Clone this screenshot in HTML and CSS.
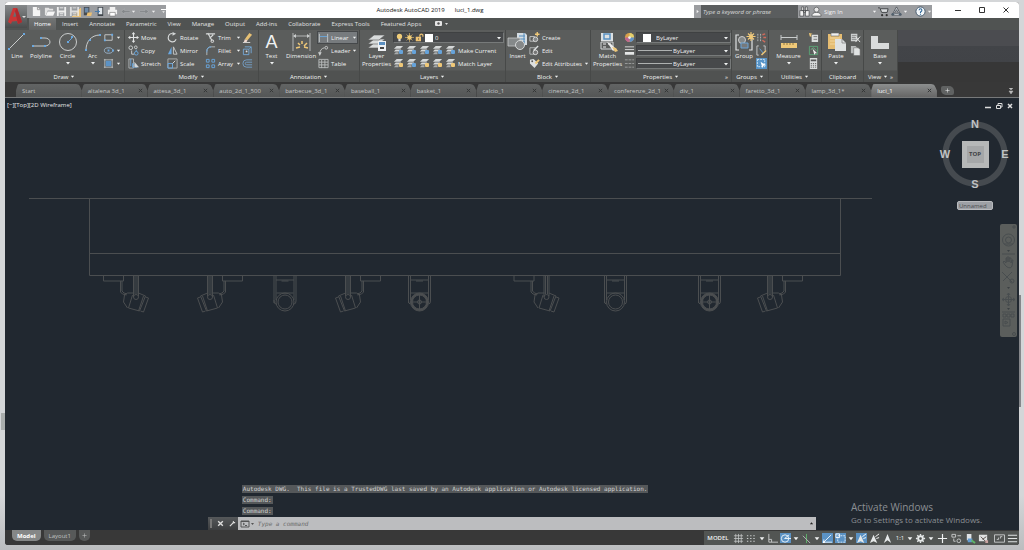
FILE: index.html
```html
<!DOCTYPE html>
<html lang="en">
<head>
<meta charset="utf-8">
<title>Autodesk AutoCAD 2019 - luci_1.dwg</title>
<link rel="stylesheet" href="styles.css">
</head>
<body>
<svg class="defs" aria-hidden="true">
  <symbol id="dn" viewBox="0 0 6 6"><path d="M1 2h4L3 4.500z" fill="currentColor"/></symbol>
  <symbol id="x" viewBox="0 0 6 6"><path d="M1 1l4 4M5 1L1 5" stroke="currentColor" stroke-width="1.200"/></symbol>
  <symbol id="new" viewBox="0 0 12 12"><path d="M2 1h5l3 3v7H2z" fill="#f4f4f4"/><path d="M7 1v3h3" fill="none" stroke="#999"/></symbol>
  <symbol id="open" viewBox="0 0 12 12"><path d="M1 2h4l1 1h4v2H4l-2 5H1z" fill="#e4e4e4"/><path d="M4 6h8l-2 4.500H2z" fill="#f5f5f5"/></symbol>
  <symbol id="save" viewBox="0 0 12 12"><path d="M1 1h10v10H1z" fill="#eee"/><path d="M3 1h6v4H3zM3 7h6v4H3z" fill="#999ca0"/><path d="M4 2h4M4 8h4M4 10h4" stroke="#eee"/></symbol>
  <symbol id="plot" viewBox="0 0 12 12"><path d="M3 1h6v3H3zM1 4h10v5H1z" fill="#f0f0f0"/><path d="M3 7h6v4H3z" fill="#fff" stroke="#777" stroke-width=".7"/></symbol>
  <symbol id="phone" viewBox="0 0 12 12"><path d="M4 1h6v10H4z" fill="#40464c"/><path d="M5 2h4v7H5z" fill="#dfe5ea"/><path d="M1 6h5M4 4l2 2-2 2" stroke="#3f76ad" fill="none"/></symbol>
  <symbol id="webopen" viewBox="0 0 12 12"><path d="M2 1h6v9H2z" fill="#464b50"/><path d="M3 2h4v5H3z" fill="#6c89a8"/><path d="M6 7h5l-1 4H5z" fill="#eabf72"/></symbol>
  <symbol id="undo" viewBox="0 0 12 12"><path d="M1 6l4-3v2h6v2H5v2z" fill="#85888b" stroke="#b5b7b9" stroke-width=".5"/></symbol>
  <symbol id="line" viewBox="0 0 24 20"><path d="M4 17L19 2" stroke="#c9cccc"/><path d="M3 16h2v2H3zM18 1h2v2h-2z" fill="#69a7df"/></symbol>
  <symbol id="pline" viewBox="0 0 24 20"><path d="M4 14h12a5 4 0 000-8h-5" fill="none" stroke="#c9cccc"/><path d="M3 13h2v2H3zM15 13h2v2h-2zM11 5h2v2h-2z" fill="#69a7df"/></symbol>
  <symbol id="circle" viewBox="0 0 24 20"><circle cx="12" cy="10" r="8.500" fill="none" stroke="#c9cccc"/><path d="M12 10l4-4" stroke="#69a7df"/><path d="M11 9h2v2h-2zM15 4h2v2h-2z" fill="#69a7df"/></symbol>
  <symbol id="arc" viewBox="0 0 24 20"><path d="M5 18C5 10 10 3 19 3" fill="none" stroke="#c9cccc"/><path d="M4 17h2v2H4zM8 7h2v2H8zM18 2h2v2h-2z" fill="#69a7df"/></symbol>
  <symbol id="rect" viewBox="0 0 12 12"><path d="M2 3h8v6H2z" fill="none" stroke="#c9cccc"/><path d="M1 8h2v2H1zM9 2h2v2H9z" fill="#69a7df"/></symbol>
  <symbol id="ell" viewBox="0 0 12 12"><ellipse cx="6" cy="6" rx="4.500" ry="3" fill="none" stroke="#9fb8d0"/><path d="M5 5h2v2H5zM10 5h2v2h-2z" fill="#69a7df"/></symbol>
  <symbol id="hatch" viewBox="0 0 12 12"><path d="M2 1v10M10 1v10M1 2h10M1 10h10" stroke="#b9bcbc"/><path d="M3 3h6v6H3z" fill="#5c92c4"/></symbol>
  <symbol id="move" viewBox="0 0 12 12"><path d="M6 1v10M1 6h10" stroke="#e2e4e4" stroke-width="1.200"/><path d="M6 0l2 2.500H4zM6 12l2-2.500H4zM0 6l2.500-2v4zM12 6L9.500 4v4z" fill="#e2e4e4"/></symbol>
  <symbol id="copy" viewBox="0 0 12 12"><g fill="none" stroke="#d0d3d3"><circle cx="3" cy="3" r="2"/><circle cx="8.500" cy="2.500" r="1.500"/><path d="M4 6v4h3"/></g><g fill="none" stroke="#69a7df"><circle cx="9" cy="9" r="2"/><path d="M9 5v2"/></g></symbol>
  <symbol id="stretch" viewBox="0 0 12 12"><path d="M1 1h5v10H1z" fill="none" stroke="#aeb3b6"/><path d="M3 1v8M5 6l5 4H5z" fill="none" stroke="#69a7df"/><path d="M7 4v6h5z" fill="#d2d6d8"/></symbol>
  <symbol id="rotate" viewBox="0 0 12 12"><path d="M10 8A4.500 4.500 0 116 1.700" fill="none" stroke="#d5d8d8" stroke-width="1.200"/><path d="M6 0l4 2-4 2z" fill="#d5d8d8"/></symbol>
  <symbol id="mirror" viewBox="0 0 12 12"><path d="M5 2v8H1z" fill="#69a7df"/><path d="M7 2v8h4z" fill="none" stroke="#c9cccc"/></symbol>
  <symbol id="scale" viewBox="0 0 12 12"><path d="M1 1h10v10H1z" fill="none" stroke="#aeb1b1"/><path d="M1 6h5v5H1z" fill="none" stroke="#69a7df"/><path d="M6 6l3-3" stroke="#ddd"/></symbol>
  <symbol id="trim" viewBox="0 0 12 12"><path d="M1 2h10M3 1l5 9M9 3L5 7" stroke="#d5d8d8" stroke-width="1.300"/><circle cx="8" cy="10" r="1.500" fill="none" stroke="#ddd"/></symbol>
  <symbol id="fillet" viewBox="0 0 12 12"><path d="M2 11V7q0-5 5-5h4" fill="none" stroke="#b9bcbc"/><path d="M2 8V7q0-5 5-5" fill="none" stroke="#69a7df"/></symbol>
  <symbol id="array" viewBox="0 0 12 12"><g fill="none" stroke="#69a7df"><path d="M1.500 1.500h3v3h-3zM7.500 1.500h3v3h-3zM7.500 7.500h3v3h-3z"/><path d="M1.500 7.500h3v3h-3z"/></g></symbol>
  <symbol id="erase" viewBox="0 0 12 12"><path d="M3 8l5-7 3 2-5 6z" fill="#e6c074"/><path d="M3 8l3 1-1 2H2z" fill="#f0d9d0"/><path d="M1 11.500h8" stroke="#ddd"/></symbol>
  <symbol id="explode" viewBox="0 0 12 12"><path d="M1.500 4.500h6v6h-6zM3 2h7v7M8 4l2-2" fill="none" stroke="#75a9d6"/><circle cx="5" cy="7" r="1" fill="#ddd"/></symbol>
  <symbol id="offset" viewBox="0 0 12 12"><path d="M11 2H5a4 4 0 000 8h6M11 4.600H5a1 1 0 000 2.800h6" fill="none" stroke="#75a0c8"/></symbol>
  <symbol id="dim" viewBox="0 0 24 20"><path d="M4 1v18M21 1v18M5 4h15" stroke="#c9cccc" stroke-width=".8"/><path d="M4 4l3-2v4zM21 4l-3-2v4z" fill="#c9cccc"/><path d="M7 16l4-1M9 11l2 2M13 9v3M18 11l-3 3M19 16l-4-1" stroke="#efc878" stroke-width="1.500"/></symbol>
  <symbol id="linear" viewBox="0 0 12 12"><path d="M1.500 2v9M10.500 2v9" stroke="#c5cacc"/><path d="M2 5h8" stroke="#69a7df"/></symbol>
  <symbol id="leader" viewBox="0 0 12 12"><path d="M2 10q0-6 5-7" fill="none" stroke="#c9cccc"/><circle cx="9" cy="3" r="1.500" fill="none" stroke="#c9cccc"/><path d="M0 8h4l-2 4z" fill="#c9cccc"/></symbol>
  <symbol id="table" viewBox="0 0 12 12"><path d="M1 1.500h10v9H1zM1 4.500h10M1 7.500h10M4 2v9M7.500 2v9" fill="none" stroke="#b9bcbc"/></symbol>
  <symbol id="layers" viewBox="0 0 24 20"><g fill="#d9dcdc" stroke="#5b5d5c" stroke-width=".6"><path d="M3 16l6-5h11l-6 5z"/><path d="M3 12l6-5h11l-6 5z"/><path d="M3 8l6-5h11l-6 5z"/></g><path d="M13 9h8v10h-8z" fill="#eef1f4"/><path d="M14 10h6v3h-6z" fill="#5a8fc0"/><path d="M15 16h4" stroke="#444" stroke-width="2"/></symbol>
  <symbol id="lay" viewBox="0 0 12 12"><path d="M1 4l3-3h7L8 4zM1 7l2-2h6L7 7z" fill="#d5d8d8"/><path d="M1 10l2-2h3v2z" fill="#a9acac"/></symbol>
  <symbol id="bulb" viewBox="0 0 12 12"><circle cx="6" cy="4.500" r="3.500" fill="#f0cd78"/><path d="M4.500 8h3v3h-3z" fill="#ddd"/></symbol>
  <symbol id="sun" viewBox="0 0 12 12"><path d="M6 0v12M0 6h12M2 2l8 8M10 2l-8 8" stroke="#c9a963"/><circle cx="6" cy="6" r="3" fill="#f0cd78"/></symbol>
  <symbol id="lock" viewBox="0 0 12 12"><path d="M1 5h7v6H1z" fill="#edc272"/><path d="M6.500 5V2.500q2-2 4 0V5" fill="none" stroke="#edc272" stroke-width="1.500"/><path d="M4 7h1v2H4z" fill="#555"/></symbol>
  <symbol id="insert" viewBox="0 0 24 20"><path d="M11 1h8l2 2v10H11z" fill="#d5dde3"/><path d="M13 4h6M13 7h6M13 10h6M18 1v11" stroke="#538cbd"/><path d="M2 6h12v8H2z" fill="#85898a" stroke="#c5c8c8" stroke-width=".8"/><circle cx="14" cy="13" r="4.500" fill="#858889" stroke="#d5d8d8"/></symbol>
  <symbol id="create" viewBox="0 0 12 12"><path d="M1 5h5v5H1z" fill="none" stroke="#c9cccc"/><circle cx="7" cy="8" r="2.500" fill="#85898a" stroke="#ddd"/><path d="M9 0v5M6.500 2.500h5" stroke="#efc878" stroke-width="1.500"/></symbol>
  <symbol id="edit" viewBox="0 0 12 12"><path d="M1 3h6v7H1z" fill="none" stroke="#b9bcbc"/><circle cx="7" cy="8" r="2.500" fill="#777" stroke="#ddd"/><path d="M5 6l5-5" stroke="#dcdfe0" stroke-width="1.500"/></symbol>
  <symbol id="attr" viewBox="0 0 12 12"><path d="M1 2l4-1 5 5-4 5-5-5z" fill="#dde0e0"/><path d="M7 6l4-4" stroke="#efc878" stroke-width="2"/><circle cx="3.500" cy="3.500" r="1" fill="#555"/></symbol>
  <symbol id="match" viewBox="0 0 24 20"><path d="M5 1h12v8H5z" fill="#dde1e3"/><path d="M8 2h6v5H8z" fill="none" stroke="#5a91c2" stroke-width="1.500"/><path d="M5 10h12v7H5z" fill="none" stroke="#d5d8d8"/><path d="M7 12h3M7 15h3M12 12h3" stroke="#eee"/><path d="M11 10l4 2 5 5-3 2z" fill="#eee"/><path d="M16 15l4 1 2 3-3 1z" fill="#efc878"/></symbol>
  <symbol id="wheel" viewBox="0 0 12 12"><circle cx="6" cy="6" r="5" fill="#d9a14b"/><path d="M6 6V1a5 5 0 015 5z" fill="#e4d06c"/><path d="M6 6h5a5 5 0 01-5 5z" fill="#6093c9"/><path d="M6 6v5a5 5 0 01-5-5z" fill="#be6592"/><circle cx="6" cy="6" r="1.500" fill="#eee"/></symbol>
  <symbol id="lw" viewBox="0 0 12 12"><path d="M1 2h10M1 5h10" stroke="#ddd"/><path d="M1 9h10" stroke="#e5e7e7" stroke-width="3"/></symbol>
  <symbol id="lt" viewBox="0 0 12 12"><path d="M1 2h10M1 6h10M1 10h10" stroke="#9c9f9f" stroke-dasharray="3 1"/></symbol>
  <symbol id="group" viewBox="0 0 24 20"><path d="M7 3H4v15h3M17 3h3v15h-3" fill="none" stroke="#dfe2e2" stroke-width="1.200"/><circle cx="10" cy="8" r="3.500" fill="#85898a" stroke="#ccc"/><path d="M9 11h7v5H9z" fill="#76797b" stroke="#6ba3d6"/><path d="M19 0v9M14.500 4.500h9M16 1.500l6 6M22 1.500l-6 6" stroke="#efc878" stroke-width="1.200"/></symbol>
  <symbol id="ungroup" viewBox="0 0 12 12"><path d="M2 2v8M5 2v8" stroke="#b9bcbc" stroke-dasharray="2 1"/><path d="M7 3l3-1M8 6h3M7 9l3 2" stroke="#cf6a5b" stroke-width="1.500"/></symbol>
  <symbol id="gedit" viewBox="0 0 12 12"><path d="M3 1H1v10h2M8 1h2v5" fill="none" stroke="#c9cccc"/><path d="M4 4l4 5" stroke="#69a7df"/><path d="M6 11l5-5" stroke="#efc878" stroke-width="1.500"/></symbol>
  <symbol id="gsel" viewBox="0 0 12 12"><path d="M0 0h12v12H0z" fill="#5794c8"/><path d="M1.500 1.500h8v8h-8z" fill="none" stroke="#d8e8f5" stroke-dasharray="2 1"/><path d="M5 4l6 4-3 .5L7 11z" fill="#fff"/></symbol>
  <symbol id="measure" viewBox="0 0 24 20"><path d="M4 3v5M20 3v5M4 5.500h16" stroke="#c9cccc"/><path d="M4 11h16v5H4z" fill="#efc878"/><path d="M7 11v2M10 11v2M13 11v2M16 11v2" stroke="#7c6638" stroke-width=".8"/></symbol>
  <symbol id="qsel" viewBox="0 0 12 12"><path d="M4 3h7v8H4z" fill="#dadddd"/><path d="M6 5h4M6 8h4" stroke="#777"/><path d="M1 1l4 1-2 1 1 2-2 0z" fill="#efc878"/></symbol>
  <symbol id="selall" viewBox="0 0 12 12"><path d="M1.500 1.500h9v9h-9z" fill="none" stroke="#5ba576"/><path d="M3 5l3-2 3 3" fill="none" stroke="#6db487"/><path d="M5 4l5 5-2 0-1 2z" fill="#eee"/></symbol>
  <symbol id="calc" viewBox="0 0 12 12"><path d="M2 0h8v12H2z" fill="#d9dcdc"/><path d="M3 2.500h6" stroke="#555" stroke-width="2"/><path d="M3 6h6M3 8h6M3 10h6" stroke="#666" stroke-dasharray="1.300 1"/></symbol>
  <symbol id="paste" viewBox="0 0 24 20"><path d="M4 2h14v15H4z" fill="#e6bd72"/><path d="M7 1h8v3H7z" fill="#efefef" stroke="#666" stroke-width=".6"/><path d="M6 6h10M6 9h10M6 12h10" stroke="#f2dca9" stroke-width=".8"/><path d="M11 7h7l4 4v8H11z" fill="#dfe2e3"/><path d="M18 7v4h4" fill="none" stroke="#777" stroke-width=".7"/></symbol>
  <symbol id="cut" viewBox="0 0 12 12"><path d="M1 2h7v8H1z" fill="#cdd0d0"/><path d="M2 4h5M2 6h5M2 8h5" stroke="#666" stroke-width=".7"/><path d="M6 5l5 6M11 5l-5 6" stroke="#eee"/></symbol>
  <symbol id="copyc" viewBox="0 0 12 12"><path d="M1 1h5l2 2v6H1z" fill="#b9bcbc"/><path d="M4 3h5l2 2v6.500H4z" fill="#e0e3e3" stroke="#666" stroke-width=".6"/></symbol>
  <symbol id="base" viewBox="0 0 24 20"><path d="M3 4h7v7h11v6H3z" fill="#d9dbdb"/></symbol>
  <symbol id="bino" viewBox="0 0 12 12"><path d="M3 1h2v4H3zM7 1h2v4H7zM1 5h4v6H1zM7 5h4v6H7zM5 5h2v2H5z" fill="#f0f0f0" stroke="#3c3f42" stroke-width=".7"/></symbol>
  <symbol id="user" viewBox="0 0 12 12"><circle cx="6" cy="4" r="2.700" fill="#e8e8e8" stroke="#4b4e50" stroke-width=".7"/><path d="M1 11q0-4 5-4t5 4z" fill="#f3f3f3" stroke="#4b4e50" stroke-width=".7"/></symbol>
  <symbol id="cart" viewBox="0 0 12 12"><path d="M0 2h2l2 5h6l1-4H3" fill="#d9dbdd" stroke="#3c3f42"/><circle cx="4.500" cy="10" r="1.200" fill="#333"/><circle cx="9.500" cy="10" r="1.200" fill="#333"/></symbol>
  <symbol id="a360" viewBox="0 0 12 12"><path d="M6 1l5 9H1zM6 4l2.500 4h-5z" fill="#dde3ea" stroke="#40464c" fill-rule="evenodd" stroke-width=".8"/><circle cx="2" cy="9" r="1.500" fill="#51606d"/><circle cx="10" cy="9" r="1.500" fill="#51606d"/></symbol>
  <symbol id="help" viewBox="0 0 12 12"><circle cx="6" cy="6" r="5" fill="#f3f7fa" stroke="#41566a"/><path d="M4.500 4.500q0-1.500 1.500-1.500t1.500 1.500Q7.500 5.500 6 6.500V7.500M6 8.500v1" fill="none" stroke="#2f6798" stroke-width="1.200"/></symbol>
  <symbol id="grid" viewBox="0 0 12 12"><path d="M3 1v10M6 1v10M9 1v10M1 3h10M1 6h10M1 9h10" stroke="#c9cccc" stroke-width=".8"/></symbol>
  <symbol id="dots" viewBox="0 0 12 12"><path d="M1 3h10M1 6h10M1 9h10" stroke="#d9dcdc" stroke-dasharray="1.500 2"/></symbol>
  <symbol id="ortho" viewBox="0 0 12 12"><path d="M2 1v9h10M2 7h3v3" fill="none" stroke="#c9cccc"/></symbol>
  <symbol id="polar" viewBox="0 0 12 12"><circle cx="5.500" cy="6" r="4" fill="none" stroke="#eef5fb"/><path d="M5 6h7M5 6l5-4" stroke="#eef5fb"/></symbol>
  <symbol id="iso" viewBox="0 0 12 12"><path d="M6 1v10" stroke="#5eb56b"/><path d="M2 3l8 8" stroke="#b9bcbc"/></symbol>
  <symbol id="track" viewBox="0 0 12 12"><path d="M2 10L10 2M2 10h9M2 10V7" stroke="#eef5fb" fill="none"/><path d="M1 9h2v2H1z" fill="#fff"/></symbol>
  <symbol id="osnap" viewBox="0 0 12 12"><path d="M3 3h8v7H3z" fill="none" stroke="#dcebf7" stroke-dasharray="2 1"/><path d="M1 1h4v4H1z" fill="none" stroke="#fff"/></symbol>
  <symbol id="anno" viewBox="0 0 12 12"><path d="M6 1L2 11l4-3 4 3z" fill="#e6e9e9"/></symbol>
  <symbol id="annov" viewBox="0 0 12 12"><path d="M5 2L1 11l4-2 4 2z" fill="#e6e9e9"/><path d="M7 4l4-3M8 6l3-1" stroke="#fff"/></symbol>
  <symbol id="gear" viewBox="0 0 12 12"><circle cx="6" cy="6" r="2.500" fill="none" stroke="#e6e9e9" stroke-width="2"/><path d="M6 1v2M6 9v2M1 6h2M9 6h2M2.500 2.500l1.300 1.300M8.200 8.200l1.300 1.300M9.500 2.500L8.200 3.800M3.800 8.200L2.500 9.500" stroke="#e6e9e9" stroke-width="1.500"/></symbol>
  <symbol id="plus" viewBox="0 0 12 12"><path d="M6 1v10M1 6h10" stroke="currentColor" stroke-width="1.300"/></symbol>
  <symbol id="units" viewBox="0 0 12 12"><path d="M1 1.500h4v3H1zM3 6v3h2M7 3h4" fill="none" stroke="#c9cccc"/><circle cx="8.500" cy="8.500" r="2" fill="none" stroke="#c9cccc"/></symbol>
  <symbol id="iso2" viewBox="0 0 12 12"><path d="M2 1h5v7H2z" fill="#dfe3e6"/><path d="M3 6h5v4H3z" fill="#629bd0"/><path d="M7 8l4 3" stroke="#5fb567" stroke-width="2"/></symbol>
  <symbol id="hw" viewBox="0 0 12 12"><path d="M1 2h9v7H1z" fill="#dfe1e1"/><path d="M3 4l6 6M9 4L5 7" stroke="#534a48"/><path d="M8 8h3v3H8z" fill="#c9a3a0"/></symbol>
  <symbol id="clean" viewBox="0 0 12 12"><path d="M.5 2h11v8H.5z" fill="none" stroke="#c9cccc"/><path d="M7 6V4h2M3 7h2V5" fill="none" stroke="#c9cccc"/></symbol>
  <symbol id="menu" viewBox="0 0 12 12"><path d="M1 2.500h10M1 6h10M1 9.500h10" stroke="#e0e3e3" stroke-width="1.200"/></symbol>
  <symbol id="lampA" viewBox="0 0 50 40" overflow="visible">
    <path d="M0 0v5h20V0M17 5v11l2 2 4 1M18.500 5v10l2 2 3 1M30 0v21M35 0v20M31.500 0v18M33.500 0v18M30.500 17L24 17l-3 2-1 7 4 6M35 17l7 3-6 15-11-3 4-13M42 21l3 1-5 14-3-1M40 20l-5 15"/><circle cx="32.500" cy="21" r="2.500"/>
  </symbol>
  <symbol id="lampC" viewBox="0 0 24 40" overflow="visible">
    <path d="M.5 0v25q0 3 2 3M2.500 0v24M22.500 0v25q0 3-2 3M20.500 0v24M2.500 4h18M3 17h17M8 5h7M.5 27v-3"/><circle cx="11.500" cy="26" r="9"/><circle cx="11.500" cy="26" r="7"/>
  </symbol>
</svg>

<div class="window">
  <header class="head">
    <button class="app" aria-label="Application menu"><svg viewBox="0 0 22 22"><path d="M3 16L8 2h4l5 14-4 2-1-3-5 .5-1 2.500zM8 11l4-.5L10 5z" fill="#c93636" fill-rule="evenodd"/><path d="M12 2l5 14-4 2-3-13z" fill="#b02a2e"/><path d="M17 10h4l-2 2z" fill="#ddd"/></svg></button>
    <div class="title">
      <div class="qat">
        <button aria-label="New"><svg><use href="#new"/></svg></button><button aria-label="Open"><svg><use href="#open"/></svg></button><button aria-label="Save"><svg><use href="#save"/></svg></button><button class="saveas" aria-label="Save as"><svg><use href="#save"/></svg></button><button aria-label="Open from web"><svg><use href="#webopen"/></svg></button><button aria-label="Save to mobile"><svg><use href="#phone"/></svg></button><button aria-label="Plot"><svg><use href="#plot"/></svg></button><button aria-label="Undo"><svg><use href="#undo"/></svg></button><svg class="dn"><use href="#dn"/></svg><button class="redo" aria-label="Redo"><svg><use href="#undo"/></svg></button><svg class="dn"><use href="#dn"/></svg><svg class="dn bar"><use href="#dn"/></svg>
      </div>
      <div class="caption"><span>Autodesk AutoCAD 2019</span><span>luci_1.dwg</span></div>
      <div class="info">
        <button class="expand" aria-label="Expand search"><svg class="dn right"><use href="#dn"/></svg></button>
        <input aria-label="Search" placeholder="Type a keyword or phrase">
        <button aria-label="Find"><svg><use href="#bino"/></svg></button>
        <button class="sign"><svg><use href="#user"/></svg>Sign In</button>
        <svg class="dn"><use href="#dn"/></svg>
        <button aria-label="Store"><svg><use href="#cart"/></svg></button>
        <button aria-label="Account"><svg><use href="#a360"/></svg></button>
        <svg class="dn"><use href="#dn"/></svg>
        <button class="helpb" aria-label="Help"><svg><use href="#help"/></svg></button>
        <svg class="dn"><use href="#dn"/></svg>
      </div>
      <div class="winbtns">
        <button aria-label="Minimize"><svg viewBox="0 0 8 8"><path d="M1 4.500h6" stroke="#333"/></svg></button>
        <button aria-label="Maximize"><svg viewBox="0 0 8 8"><path d="M1.500 1.500h5v5h-5z" fill="none" stroke="#333"/></svg></button>
        <button aria-label="Close"><svg viewBox="0 0 8 8"><path d="M1.500 1.500l5 5M6.500 1.500l-5 5" stroke="#333"/></svg></button>
      </div>
    </div>
    <nav class="menu">
      <button class="on">Home</button><button>Insert</button><button>Annotate</button><button>Parametric</button><button>View</button><button>Manage</button><button>Output</button><button>Add-ins</button><button>Collaborate</button><button>Express Tools</button><button>Featured Apps</button>
      <button class="cam" aria-label="Ribbon display"><svg viewBox="0 0 18 8"><rect x="3" y="1" width="7" height="5" rx="1" fill="#e5e5e5"/><circle cx="6.500" cy="3.500" r="1.200" fill="#555"/><path d="M13 3h3l-1.500 2z" fill="#ddd"/></svg></button>
    </nav>
  </header>

  <section class="ribbon">
    <div class="panel draw">
      <div class="tools">
        <button class="big"><svg><use href="#line"/></svg>Line</button>
        <button class="big"><svg><use href="#pline"/></svg>Polyline</button>
        <button class="big"><svg><use href="#circle"/></svg>Circle<svg class="dn"><use href="#dn"/></svg></button>
        <button class="big"><svg><use href="#arc"/></svg>Arc<svg class="dn"><use href="#dn"/></svg></button>
        <div class="col">
          <button class="t" aria-label="Rectangle"><svg><use href="#rect"/></svg><svg class="dn"><use href="#dn"/></svg></button>
          <button class="t" aria-label="Ellipse"><svg><use href="#ell"/></svg><svg class="dn"><use href="#dn"/></svg></button>
          <button class="t" aria-label="Hatch"><svg><use href="#hatch"/></svg><svg class="dn"><use href="#dn"/></svg></button>
        </div>
      </div>
      <h2>Draw <svg class="dn"><use href="#dn"/></svg></h2>
    </div>
    <div class="panel modify">
      <div class="tools">
        <div class="col"><button class="t"><svg><use href="#move"/></svg>Move</button><button class="t"><svg><use href="#copy"/></svg>Copy</button><button class="t"><svg><use href="#stretch"/></svg>Stretch</button></div>
        <div class="col"><button class="t"><svg><use href="#rotate"/></svg>Rotate</button><button class="t"><svg><use href="#mirror"/></svg>Mirror</button><button class="t"><svg><use href="#scale"/></svg>Scale</button></div>
        <div class="col"><button class="t far"><svg><use href="#trim"/></svg>Trim<svg class="dn"><use href="#dn"/></svg></button><button class="t far"><svg><use href="#fillet"/></svg>Fillet<svg class="dn"><use href="#dn"/></svg></button><button class="t far"><svg><use href="#array"/></svg>Array<svg class="dn"><use href="#dn"/></svg></button></div>
        <div class="col"><button class="t" aria-label="Erase"><svg><use href="#erase"/></svg></button><button class="t" aria-label="Explode"><svg><use href="#explode"/></svg></button><button class="t" aria-label="Offset"><svg><use href="#offset"/></svg></button></div>
      </div>
      <h2>Modify <svg class="dn"><use href="#dn"/></svg></h2>
    </div>
    <div class="panel annotation">
      <div class="tools">
        <button class="big"><span class="letter">A</span>Text<svg class="dn"><use href="#dn"/></svg></button>
        <button class="big"><svg><use href="#dim"/></svg>Dimension</button>
        <div class="col"><button class="t far lin"><svg><use href="#linear"/></svg>Linear<svg class="dn"><use href="#dn"/></svg></button><button class="t far"><svg><use href="#leader"/></svg>Leader<svg class="dn"><use href="#dn"/></svg></button><button class="t"><svg><use href="#table"/></svg>Table</button></div>
      </div>
      <h2>Annotation <svg class="dn"><use href="#dn"/></svg></h2>
    </div>
    <div class="panel layers">
      <div class="tools">
        <button class="big"><svg><use href="#layers"/></svg>Layer<br>Properties</button>
        <div class="col">
          <div class="combo"><svg><use href="#bulb"/></svg><svg><use href="#sun"/></svg><svg><use href="#lock"/></svg><i class="swatch"></i><select aria-label="Layer"><option>0</option></select><svg class="dn"><use href="#dn"/></svg></div>
          <div class="row"><button class="t b" aria-label="Off"><svg><use href="#lay"/></svg></button><button class="t b" aria-label="Isolate"><svg><use href="#lay"/></svg></button><button class="t b" aria-label="Freeze"><svg><use href="#lay"/></svg></button><button class="t b" aria-label="Lock"><svg><use href="#lay"/></svg></button><button class="t b"><svg><use href="#lay"/></svg>Make Current</button></div>
          <div class="row"><button class="t y" aria-label="Turn all on"><svg><use href="#lay"/></svg></button><button class="t b" aria-label="Unisolate"><svg><use href="#lay"/></svg></button><button class="t y" aria-label="Thaw all"><svg><use href="#lay"/></svg></button><button class="t y" aria-label="Unlock"><svg><use href="#lay"/></svg></button><button class="t y"><svg><use href="#lay"/></svg>Match Layer</button></div>
        </div>
      </div>
      <h2>Layers <svg class="dn"><use href="#dn"/></svg></h2>
    </div>
    <div class="panel block">
      <div class="tools">
        <button class="big"><svg><use href="#insert"/></svg>Insert</button>
        <div class="col"><button class="t"><svg><use href="#create"/></svg>Create</button><button class="t"><svg><use href="#edit"/></svg>Edit</button><button class="t far"><svg><use href="#attr"/></svg>Edit Attributes<svg class="dn"><use href="#dn"/></svg></button></div>
      </div>
      <h2>Block <svg class="dn"><use href="#dn"/></svg></h2>
    </div>
    <div class="panel props">
      <div class="tools">
        <button class="big"><svg><use href="#match"/></svg>Match<br>Properties</button>
        <div class="col"><button class="t" aria-label="Color"><svg><use href="#wheel"/></svg></button><button class="t" aria-label="Lineweight"><svg><use href="#lw"/></svg></button><button class="t" aria-label="Linetype"><svg><use href="#lt"/></svg></button></div>
        <div class="col">
          <div class="combo"><i class="swatch"></i><select aria-label="Object color"><option>ByLayer</option></select><svg class="dn"><use href="#dn"/></svg></div>
          <div class="combo"><i class="rule"></i><select aria-label="Object lineweight"><option>ByLayer</option></select><svg class="dn"><use href="#dn"/></svg></div>
          <div class="combo"><i class="rule"></i><select aria-label="Object linetype"><option>ByLayer</option></select><svg class="dn"><use href="#dn"/></svg></div>
        </div>
      </div>
      <h2>Properties <svg class="dn"><use href="#dn"/></svg><span class="launch">»</span></h2>
    </div>
    <div class="panel groups">
      <div class="tools">
        <button class="big"><svg><use href="#group"/></svg>Group</button>
        <div class="col"><button class="t" aria-label="Ungroup"><svg><use href="#ungroup"/></svg></button><button class="t" aria-label="Group edit"><svg><use href="#gedit"/></svg></button><button class="t" aria-label="Group selection"><svg><use href="#gsel"/></svg></button></div>
      </div>
      <h2>Groups <svg class="dn"><use href="#dn"/></svg></h2>
    </div>
    <div class="panel utils">
      <div class="tools">
        <button class="big"><svg><use href="#measure"/></svg>Measure<svg class="dn"><use href="#dn"/></svg></button>
        <div class="col"><button class="t" aria-label="Quick select"><svg><use href="#qsel"/></svg></button><button class="t" aria-label="Select all"><svg><use href="#selall"/></svg></button><button class="t" aria-label="Calculator"><svg><use href="#calc"/></svg></button></div>
      </div>
      <h2>Utilities <svg class="dn"><use href="#dn"/></svg></h2>
    </div>
    <div class="panel clip">
      <div class="tools">
        <button class="big"><svg><use href="#paste"/></svg>Paste<svg class="dn"><use href="#dn"/></svg></button>
        <div class="col"><button class="t" aria-label="Cut"><svg><use href="#cut"/></svg></button><button class="t" aria-label="Copy clip"><svg><use href="#copyc"/></svg></button></div>
      </div>
      <h2>Clipboard</h2>
    </div>
    <div class="panel view">
      <div class="tools"><button class="big"><svg><use href="#base"/></svg>Base<svg class="dn"><use href="#dn"/></svg></button></div>
      <h2>View <svg class="dn"><use href="#dn"/></svg> »</h2>
    </div>
  </section>

  <nav class="files">
    <div class="file"><button>Start</button></div>
    <div class="file"><button>altalena 3d_1</button><svg class="dn"><use href="#x"/></svg></div>
    <div class="file"><button>attesa_3d_1</button><svg class="dn"><use href="#x"/></svg></div>
    <div class="file"><button>auto_2d_1_500</button><svg class="dn"><use href="#x"/></svg></div>
    <div class="file"><button>barbecue_3d_1</button><svg class="dn"><use href="#x"/></svg></div>
    <div class="file"><button>baseball_1</button><svg class="dn"><use href="#x"/></svg></div>
    <div class="file"><button>basket_1</button><svg class="dn"><use href="#x"/></svg></div>
    <div class="file"><button>calcio_1</button><svg class="dn"><use href="#x"/></svg></div>
    <div class="file"><button>cinema_2d_1</button><svg class="dn"><use href="#x"/></svg></div>
    <div class="file"><button>conferenze_2d_1</button><svg class="dn"><use href="#x"/></svg></div>
    <div class="file"><button>div_1</button><svg class="dn"><use href="#x"/></svg></div>
    <div class="file"><button>faretto_3d_1</button><svg class="dn"><use href="#x"/></svg></div>
    <div class="file"><button>lamp_3d_1*</button><svg class="dn"><use href="#x"/></svg></div>
    <div class="file on"><button>luci_1</button><svg class="dn"><use href="#x"/></svg></div>
    <div class="tail"><button class="add" aria-label="New drawing"><svg class="dn"><use href="#plus"/></svg></button><button aria-label="More tabs"><svg class="more" viewBox="0 0 6 8"><path d="M1 1l2 2 2-2M1 4h4L3 7z" fill="#bbb" stroke="#bbb" stroke-width=".5"/></svg></button></div>
  </nav>

  <main class="canvas">
    <svg class="drawing" viewBox="5 98 1014 432" preserveAspectRatio="xMidYMin meet" role="img" aria-label="Ceiling track with spotlights">
      <path d="M29 198.500H872M89.500 198.500V275.500H840.500V198.500M89.500 253.500H840.500"/>
      <use href="#lampA" x="103.500" y="276" width="50" height="40"/>
      <use href="#lampA" x="514" y="276" width="50" height="40"/>
      <use href="#lampA" width="50" height="40" transform="translate(242.500 276) scale(-1 1)"/>
      <use href="#lampA" width="50" height="40" transform="translate(380.500 276) scale(-1 1)"/>
      <use href="#lampA" width="50" height="40" transform="translate(802.500 276) scale(-1 1)"/>
      <use href="#lampC" x="273.500" y="276" width="24" height="40"/>
      <use href="#lampC" x="408" y="276" width="24" height="40"/>
      <use href="#lampC" x="604" y="276" width="24" height="40"/>
      <use href="#lampC" x="698" y="276" width="24" height="40"/>
      <g><circle cx="419.500" cy="302" r="8" stroke-width="2"/><path d="M419.500 295v14M412.500 302h14"/><circle cx="419.500" cy="302" r="2"/></g>
      <g><circle cx="709.500" cy="302" r="8" stroke-width="2"/><path d="M709.500 295v14M702.500 302h14"/><circle cx="709.500" cy="302" r="2"/></g>
    </svg>
    <div class="vp">[−][Top][2D Wireframe]</div>
    <div class="vpbtns">
      <svg viewBox="0 0 8 8"><path d="M1 5.500h6" stroke="#ddd" stroke-width="1.500"/></svg>
      <svg viewBox="0 0 8 8"><path d="M1.500 3.500h4v3h-4zM3 3V1.500h4V5H6" fill="none" stroke="#ddd"/></svg>
      <svg viewBox="0 0 8 8"><path d="M2 2l4 4M6 2L2 6" stroke="#ddd" stroke-width="1.500"/></svg>
    </div>
    <div class="side">
      <div class="cube">
        <b class="n">N</b><b class="w">W</b><button>TOP</button><b class="e">E</b><b class="s">S</b>
      </div>
      <button class="ucs">Unnamed</button>
    </div>
    <div class="navbar">
      <svg viewBox="0 0 17 113"><g fill="none" stroke="#484d4f"><circle cx="8.500" cy="16" r="6"/><circle cx="8.500" cy="16" r="3"/><path d="M4 20h9M2 30h13M2 88h13M13 2h2v2h-2z"/><path d="M5 41l-2-3 1-1 2 2v-5h1v4-5h2v5-4h2v5l1-3h1l-1 6q-1 3-5 1zM2 48l10 10M12 48L3 57"/><circle cx="12" cy="57" r="2"/><path d="M8.500 69v13M2 75.500h13M7 71l1.500-2 1.500 2M7 80l1.500 2 1.500-2M4 74l-2 1.500 2 1.500M13 74l2 1.500-2 1.500"/><circle cx="8.500" cy="75.500" r="3"/><path d="M3 90h3v3H3zM7 90h3v3H7zM11 90h3v3h-3zM3 95h7v7H3z"/><path d="M5 97l3 1.500-3 1.500z"/><circle cx="14" cy="110" r="1.500"/></g><path d="M7 26h3l-1.500 2zM7 63h3l-1.500 2zM7 84h3l-1.500 2z" fill="#3b4044"/></svg>
    </div>
    <div class="watermark"><strong>Activate Windows</strong><span>Go to Settings to activate Windows.</span></div>
    <div class="command">
      <div class="log"><span>Autodesk DWG.&nbsp; This file is a TrustedDWG last saved by an Autodesk application or Autodesk licensed application.</span><span>Command:</span><span>Command:</span></div>
      <div class="prompt">
        <div class="grip"><i></i><button aria-label="Close"><svg><use href="#x"/></svg></button><button aria-label="Customize"><svg viewBox="0 0 8 8"><path d="M1 7l4-4" stroke="#ddd" stroke-width="1.500"/><path d="M5 1v2h2" fill="none" stroke="#ddd" stroke-width="1.200"/></svg></button></div>
        <svg class="term" viewBox="0 0 14 8"><path d="M1 1h8v6H1z" fill="none" stroke="#555"/><path d="M1 1.500h8M3 3l1.500 1L3 5M5 5.500h2" fill="none" stroke="#555"/><path d="M11 3h3l-1.500 2z" fill="#555"/></svg>
        <input aria-label="Command" placeholder="Type a command">
        <svg class="dn up"><use href="#dn"/></svg>
      </div>
    </div>
  </main>

  <footer class="status">
    <div class="layouts"><button class="on">Model</button><button>Layout1</button><button class="plus" aria-label="New layout"><svg class="dn"><use href="#plus"/></svg></button></div>
    <div class="toggles">
      <button class="txt">MODEL</button>
      <button aria-label="Grid"><svg><use href="#grid"/></svg></button><button aria-label="Snap"><svg><use href="#dots"/></svg></button><svg class="dn"><use href="#dn"/></svg>
      <button aria-label="Ortho"><svg><use href="#ortho"/></svg></button><button class="on" aria-label="Polar"><svg><use href="#polar"/></svg></button><svg class="dn"><use href="#dn"/></svg>
      <button aria-label="Isodraft"><svg><use href="#iso"/></svg></button><svg class="dn"><use href="#dn"/></svg>
      <button class="on" aria-label="Tracking"><svg><use href="#track"/></svg></button><button class="on" aria-label="Object snap"><svg><use href="#osnap"/></svg></button><svg class="dn"><use href="#dn"/></svg>
      <button class="on" aria-label="Annotation visibility"><svg><use href="#annov"/></svg></button><button aria-label="Auto scale"><svg><use href="#annov"/></svg></button><button aria-label="Annotation scale"><svg><use href="#anno"/></svg></button><button class="ratio">1:1</button><svg class="dn"><use href="#dn"/></svg>
      <button aria-label="Workspace"><svg><use href="#gear"/></svg></button><svg class="dn"><use href="#dn"/></svg>
      <button class="wide" aria-label="Monitor"><svg><use href="#plus"/></svg></button><button class="wide" aria-label="Units"><svg><use href="#units"/></svg></button><button class="wide" aria-label="Isolate objects"><svg><use href="#iso2"/></svg></button><button aria-label="Hardware"><svg><use href="#hw"/></svg></button><button class="wide gapl" aria-label="Clean screen"><svg><use href="#clean"/></svg></button><button aria-label="Customization"><svg><use href="#menu"/></svg></button>
    </div>
  </footer>
</div>
</body>
</html>
```
FILE: styles.css
```css
* { box-sizing: border-box; }
body {
  margin: 0;
  min-height: 100vh;
  padding: 2px 5px 5px;
  display: flex;
  font: 6px/8px "Open Sans", "Noto Sans", sans-serif;
  color: #f0f2f2;
  background:
    linear-gradient(#a9adac, #a9adac) 1px 413px / 4px 17px no-repeat,
    linear-gradient(#85878b, #85878b) right 3px top 295px / 2px 112px no-repeat,
    linear-gradient(#d4d6d8 90%, #bbbdbf);
}
button, input, select { font: inherit; color: inherit; background: none; border: 0; padding: 0; margin: 0; min-width: 0; }
button { display: flex; align-items: center; justify-content: center; white-space: nowrap; }
svg { display: block; width: 11px; height: 11px; flex: none; }
.defs { position: absolute; width: 0; height: 0; }
.dn { width: 5px; height: 5px; }
.window { flex: 1; min-width: 0; display: flex; flex-direction: column; overflow: hidden; border-radius: 3px; background: #383838; }

.head { display: grid; grid-template: 16px 12px / 22px minmax(0, 1fr); background: linear-gradient(#fff 16px, #505352 16px); }
.app { grid-row: 1 / 3; margin: 3px 0 2px; background: linear-gradient(#85888a, #4a4c4c); }
.app svg { width: 22px; height: 22px; }
.title { display: flex; align-items: stretch; color: #333; }
.title .qat, .title .info { display: flex; align-items: center; background: #9b9da0; margin-top: 3px; }
.qat { width: 139px; padding-left: 3px; color: #eee; }
.qat button, .info button { width: 13px; }
.saveas { background: linear-gradient(135deg, transparent 60%, #eabf72 60%); }
.saveas svg { opacity: .8; }
.redo { margin-left: 2px; transform: scaleX(-1); }
.bar { margin-left: 5px; border-top: 1px solid #fff; }
.caption { flex: 1; display: flex; align-items: center; justify-content: center; gap: 10px; color: #111; }
.info { width: 238px; color: #f4f4f4; }
.title .info input { width: 97px; height: 13px; padding: 0 2px; background: #5a5d5e; font-style: italic; }
input::placeholder { color: inherit; opacity: .8; }
.info .expand { width: 7px; }
.right { transform: rotate(-90deg); }
.info .sign { flex: 1; justify-content: flex-start; gap: 2px; }
.info .helpb { margin-left: 6px; }
.winbtns { width: 87px; padding-left: 14px; display: flex; }
.winbtns button { width: 24px; }
.winbtns svg { width: 8px; height: 8px; }
.menu { display: flex; gap: 1px; padding-left: 2px; color: #e0e2e2; }
.menu button { padding: 0 5px; }
.menu .on { background: linear-gradient(#727474, #606262); color: #fff; border-radius: 1px 1px 0 0; }
.menu .cam svg { width: 18px; height: 8px; }

.ribbon { display: flex; background: linear-gradient(#4b4c50 16px, #424448 16px, #414347 32px, #373737 32px); }
.panel { flex: none; border-right: 1px solid #474948; background: #5b5d5c; }
.tools { display: grid; height: 40px; padding: 1px 2px 0 0; justify-content: start; }
.panel h2 { display: flex; align-items: center; justify-content: center; gap: 2px; margin: 0; height: 12px; font: inherit; background: #505251; border-top: 1px solid #555756; position: relative; }
.launch { position: absolute; right: 3px; }
.big { flex-direction: column; justify-content: flex-start; text-align: center; display: flex; padding-top: 1px; line-height: 8px; }
.big svg { width: 24px; height: 20px; }
.big .dn { width: 6px; height: 6px; }
.letter { font: 18px/20px "Liberation Sans", sans-serif; height: 20px; }
.col { display: grid; grid-template-rows: repeat(3, 13px); align-content: start; }
.t { justify-content: flex-start; gap: 2px; position: relative; }
.far .dn { margin-left: auto; }
.draw { width: 120px; }
.draw .tools { grid-template-columns: 24px 24px 29px 21px 20px; }
.modify { width: 134px; }
.modify .tools { grid-template-columns: 38px 37px 36px 12px; padding-left: 3px; gap: 1px; }
.annotation { width: 101px; }
.annotation .tools { grid-template-columns: 25px 34px 39px; }
.lin { margin: 1px 0; background: #777b7e; outline: 1px solid #45484a; }
.layers { width: 146px; }
.layers .tools { grid-template-columns: 33px 111px; }
.row { display: flex; gap: 2px; }
.b::after, .y::after { content: ""; position: absolute; left: 6px; top: 6px; width: 4px; height: 4px; border-radius: 1px; background: #66a3da; }
.y::after { background: #efc878; }
.combo { display: flex; align-items: center; gap: 1px; height: 11px; margin-top: 1px; padding: 0 1px; border: 1px solid; border-color: #3f4142 #777a7a #777a7a #3f4142; background: #47494b; }
.combo svg { width: 9px; height: 9px; }
.combo .dn { width: 6px; height: 6px; }
.combo select { flex: 1; appearance: none; }
.swatch { width: 8px; height: 8px; background: #fff; margin-right: 1px; }
.block { width: 85px; }
.block .tools { grid-template-columns: 23px 60px; }
.props { width: 141px; }
.props .tools { grid-template-columns: 33px 12px 95px; padding-right: 0; }
.props .swatch { margin: 0 4px 0 5px; }
.rule { width: 34px; height: 1px; background: #aeb1b1; }
.groups { width: 37px; }
.groups .tools { grid-template-columns: 24px 11px; }
.utils { width: 53px; }
.utils .tools { grid-template-columns: 39px 11px; }
.clip { width: 42px; }
.clip .tools { grid-template-columns: 28px 11px; }
.view { width: 34px; }
.view .tools { grid-template-columns: 32px; }

.files { display: flex; height: 16px; padding: 2px 0 0 11px; background: #383838; border-bottom: 1px solid #77797a; }
.file { flex: 1; min-width: 0; display: flex; align-items: center; justify-content: space-between; padding: 0 5px 0 6px; color: #c5c7c7; background: linear-gradient(#626464, #545656); border-radius: 4px 6px 0 0; clip-path: polygon(2px 0, calc(100% - 3px) 0, 100% 50%, 100% 100%, 0 100%, 0 50%); }
.file .dn { color: #363838; }
.file.on { background: linear-gradient(#8c8e8e, #666); color: #fff; }
.tail { width: 82px; display: flex; align-items: center; justify-content: space-between; padding: 0 5px 0 4px; }
.add { width: 13px; height: 9px; background: #606262; border-radius: 2px 5px 2px 5px; }
.more { width: 6px; height: 8px; }

.canvas { flex: 1; position: relative; min-height: 432px; background: #212830; }
.drawing { width: 100%; height: auto; fill: none; stroke: #4b4e50; stroke-width: 1; }
.vp { position: absolute; left: 2px; top: 3px; color: #e3e5e6; }
.vpbtns { position: absolute; right: 5px; top: 4px; display: flex; gap: 3px; }
.vpbtns svg { width: 8px; height: 8px; }
.side { position: absolute; right: 7px; top: 19px; display: flex; flex-direction: column; align-items: center; gap: 10px; }
.cube { width: 74px; height: 74px; display: grid; grid-template: 14px 46px 14px / 14px 46px 14px; place-items: center; font: bold 11px/12px "Liberation Sans", sans-serif; color: #c0c2c4; background: radial-gradient(circle, transparent 26px, #454a4f 27px, #454a4f 32px, transparent 33px); }
.n { grid-area: 1 / 2; }
.w { grid-area: 2 / 1; }
.e { grid-area: 2 / 3; }
.s { grid-area: 3 / 2; }
.cube button { grid-area: 2 / 2; width: 27px; height: 27px; background: #a5a7a8; border: 5px solid #b6b8b8; color: #3e4144; font: bold 6px/8px "Open Sans", sans-serif; }
.ucs { width: 36px; height: 9px; padding-left: 1px; justify-content: flex-start; border-radius: 2px; background: #9da0a5; color: #4b4e52; border: 1px solid #b8babd; }
.navbar { position: absolute; right: 2px; top: 126px; border-radius: 2px; background: #5b5e5c; }
.navbar svg { width: 17px; height: 113px; }
.watermark { position: absolute; right: 37px; bottom: 5px; display: grid; gap: 1px; color: #8b8f93; font-size: 8px; line-height: 10px; }
.watermark strong { font-size: 10px; line-height: 14px; font-weight: 400; }
.command { position: absolute; left: 20%; right: 20%; bottom: 0; font-family: "DejaVu Sans Mono", monospace; }
.log { display: flex; flex-direction: column; align-items: flex-start; gap: 3px; padding: 0 0 2px 34px; }
.log span { background: #55585a; color: #d0d2d3; padding: 0 1px; }
.prompt { display: flex; align-items: center; height: 13px; background: #bcbdbf; color: #555; }
.grip { width: 30px; height: 13px; display: flex; align-items: center; gap: 5px; padding-left: 2px; background: linear-gradient(#55585a, #3c3e40); color: #ddd; }
.grip i { width: 2px; height: 9px; background: #777; }
.grip svg { width: 7px; height: 7px; }
.term { width: 14px; height: 8px; margin: 0 4px 0 2px; }
.prompt input { flex: 1; font-style: italic; }
.up { transform: rotate(180deg); margin-right: 2px; color: #222; }

.status { display: flex; justify-content: space-between; height: 15px; background: #383838; }
.layouts { display: flex; gap: 3px; padding-left: 7px; height: 11px; }
.layouts button { padding: 0 5px; background: #575959; color: #c0c2c2; border-radius: 0 0 5px 5px; }
.layouts .on { background: #858787; color: #fff; font-weight: 700; }
.layouts .plus { padding: 0 3px; }
.toggles { display: flex; align-items: center; height: 14px; margin-top: 1px; background: #525553; }
.toggles button { width: 13px; height: 12px; }
.toggles .txt { width: 28px; font-weight: 600; }
.toggles .ratio { width: 12px; }
.toggles .wide { width: 14px; }
.toggles .gapl { margin-left: 2px; }
.toggles .dn { width: 8px; height: 7px; }
.toggles .on { background: #5b92c4; outline: 1px solid #525553; outline-offset: -1px; }
```
